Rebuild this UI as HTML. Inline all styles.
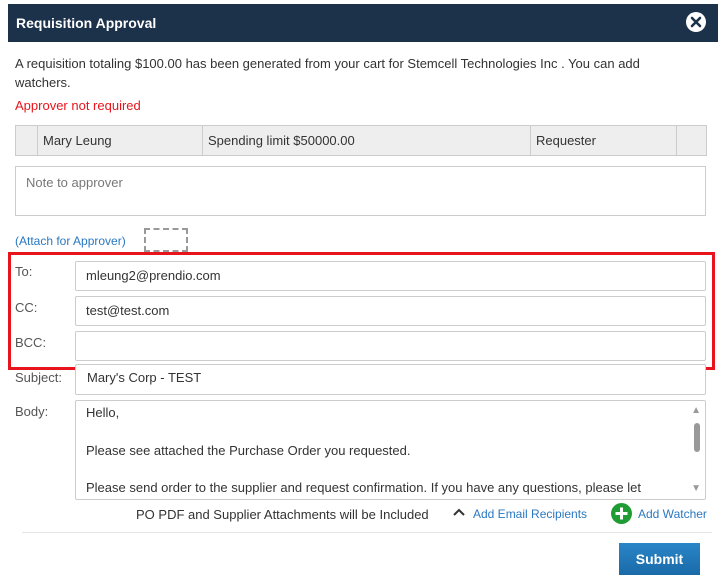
<!DOCTYPE html>
<html><head><style>
body{margin:0;width:724px;height:585px;background:#fff;font-family:"Liberation Sans",sans-serif;font-size:13px;color:#333;position:relative;overflow:hidden}
.a{position:absolute}
.inp{position:absolute;left:75px;width:629px;border:1px solid #ccc;border-radius:2px;background:#fff}
.inp span{position:absolute;left:10px;top:6px}
.lbl{position:absolute;left:15px;color:#555}
</style></head><body>
<div class="a" style="left:8px;top:4px;width:710px;height:38px;background:#1c314a"></div>
<div class="a" style="left:16px;top:15px;color:#fff;font-weight:bold;font-size:14px">Requisition Approval</div>
<div class="a" style="left:686px;top:12px;width:20px;height:20px;border-radius:50%;background:#fff"><svg width="20" height="20"><path d="M6 6L14 14M14 6L6 14" stroke="#1c314a" stroke-width="2.6" stroke-linecap="round"/></svg></div>
<div class="a" style="left:15px;top:54px;width:650px;line-height:19px;font-size:13px">A requisition totaling $100.00 has been generated from your cart for Stemcell Technologies Inc . You can add watchers.</div>
<div class="a" style="left:15px;top:98px;color:#e8141c">Approver not required</div>
<div class="a" style="left:15px;top:125px;width:690px;height:29px;background:#eee;border:1px solid #ccc"></div>
<div class="a" style="left:37px;top:126px;width:1px;height:29px;background:#ccc"></div>
<div class="a" style="left:202px;top:126px;width:1px;height:29px;background:#ccc"></div>
<div class="a" style="left:530px;top:126px;width:1px;height:29px;background:#ccc"></div>
<div class="a" style="left:676px;top:126px;width:1px;height:29px;background:#ccc"></div>
<div class="a" style="left:43px;top:133px">Mary Leung</div>
<div class="a" style="left:208px;top:133px">Spending limit $50000.00</div>
<div class="a" style="left:536px;top:133px">Requester</div>
<div class="a" style="left:15px;top:166px;width:689px;height:48px;border:1px solid #ccc"></div>
<div class="a" style="left:26px;top:175px;color:#777">Note to approver</div>
<div class="a" style="left:15px;top:234px;color:#2a78c0;font-size:12px">(Attach for Approver)</div>
<div class="a" style="left:144px;top:228px;width:40px;height:20px;border:2px dashed #999"></div>
<div class="a" style="left:8px;top:252px;width:701px;height:112px;border:3px solid #e8141c"></div>
<div class="lbl" style="top:264px">To:</div>
<div class="inp" style="top:261px;height:28px"><span>mleung2@prendio.com</span></div>
<div class="lbl" style="top:300px">CC:</div>
<div class="inp" style="top:296px;height:28px"><span>test@test.com</span></div>
<div class="lbl" style="top:335px">BCC:</div>
<div class="inp" style="top:331px;height:28px"></div>
<div class="lbl" style="top:370px">Subject:</div>
<div class="inp" style="top:364px;height:29px"><span style="left:11px;top:5px">Mary's Corp - TEST</span></div>
<div class="lbl" style="top:404px">Body:</div>
<div class="inp" style="top:400px;height:98px;overflow:hidden"><div style="position:absolute;left:10px;top:-7px;line-height:37.5px;white-space:nowrap">Hello,<br>Please see attached the Purchase Order you requested.<br>Please send order to the supplier and request confirmation. If you have any questions, please let</div>
<div style="position:absolute;right:0;top:0;width:17px;height:98px;background:#fff"></div>
<div style="position:absolute;right:4px;top:4px;font-size:10px;color:#999">▲</div>
<div style="position:absolute;right:5px;top:22px;width:6px;height:29px;border-radius:3px;background:#999"></div>
<div style="position:absolute;right:4px;top:82px;font-size:10px;color:#999">▼</div></div>
<div class="a" style="left:136px;top:507px">PO PDF and Supplier Attachments will be Included</div>
<svg class="a" style="left:452px;top:507px" width="14" height="10"><path d="M2 8L7 3L12 8" stroke="#333" stroke-width="2" fill="none"/></svg>
<div class="a" style="left:473px;top:507px;color:#2a78c0;font-size:12px">Add Email Recipients</div>
<div class="a" style="left:611px;top:503px;width:21px;height:21px;border-radius:50%;background:#1f9d34"><svg width="21" height="21"><path d="M10.5 4.5V16.5M4.5 10.5H16.5" stroke="#fff" stroke-width="3"/></svg></div>
<div class="a" style="left:638px;top:507px;color:#2a78c0;font-size:12px">Add Watcher</div>
<div class="a" style="left:22px;top:532px;width:690px;height:1px;background:#e5e5e5"></div>
<div class="a" style="left:619px;top:543px;width:81px;height:32px;background:linear-gradient(#2a86c8,#1a6aa8);color:#fff;font-weight:bold;font-size:14px;text-align:center;line-height:32px">Submit</div>
</body></html>
